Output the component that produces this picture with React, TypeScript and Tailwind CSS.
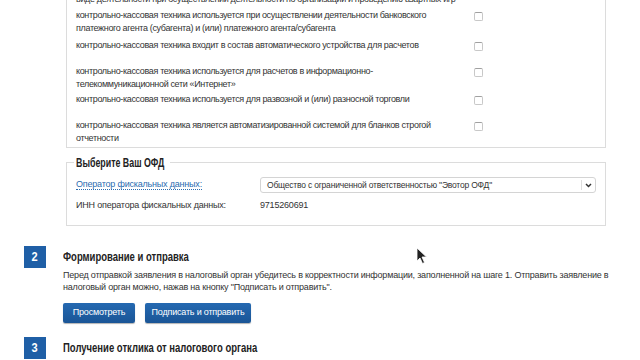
import React from "react";

const body = "font-['Liberation_Sans',Arial,sans-serif]";
const bold = "font-['Liberation_Sans',Arial,sans-serif] font-bold";

function Checkbox() {
  return (
    <div className="mt-[3px] h-[9px] w-[9px] shrink-0 rounded-[2px] border border-[#c8c8c8] border-t-[#a0a0a0] bg-white" />
  );
}

function Row({ h, lines }: { h: string; lines: string[] }) {
  return (
    <div className={`flex ${h}`}>
      <div className="w-[407px] shrink-0 pl-[9px] text-[9px] leading-[13px] tracking-[-0.35px] text-[#333] whitespace-nowrap">
        {lines.map((l, i) => (
          <div key={i}>{l}</div>
        ))}
      </div>
      <Checkbox />
    </div>
  );
}

function Badge({ n }: { n: string }) {
  return (
    <div className={`flex h-[22px] w-[22px] shrink-0 items-center justify-center bg-[#1f5fa6] text-[13px] text-white ${bold}`}>
      <span className="inline-block scale-x-[0.85]">{n}</span>
    </div>
  );
}

function Heading({ children }: { children: React.ReactNode }) {
  return (
    <div className={`whitespace-nowrap text-[13px] leading-[22px] text-[#222] ${bold}`}>
      <span className="inline-block origin-left scale-x-[0.73]">{children}</span>
    </div>
  );
}

function Cursor() {
  return (
    <svg className="absolute left-[416px] top-[247px]" width="12" height="18" viewBox="0 0 12 18">
      <path d="M1 1 L1 14 L4 11 L6.5 16.5 L8.5 15.5 L6 10 L10.5 10 Z" fill="#222" stroke="#fff" strokeWidth="0.8" />
    </svg>
  );
}

const btn =
  "h-[20px] whitespace-nowrap rounded-[2px] bg-gradient-to-b from-[#2569b1] to-[#1a5596] text-[9px] tracking-[-0.2px] text-white shadow-[0_1px_1px_rgba(0,0,0,0.3)]";

export default function App() {
  return (
    <div className={`relative h-[360px] w-[640px] overflow-hidden bg-white ${body}`}>
      <div className="pl-[63px]">
        {/* Step 1 checkbox card */}
        <div className="-mt-[23px] ml-[3px] w-[540px] border border-[#dcdcdc] pt-[2px] pb-[2px]">
          <Row h="h-[29px]" lines={["контрольно-кассовая техника используется лицами, осуществляющими деятельность", "виде деятельности при осуществлении деятельности по организации и проведению азартных игр"]} />
          <Row h="h-[30px]" lines={["контрольно-кассовая техника используется при осуществлении деятельности банковского", "платежного агента (субагента) и (или) платежного агента/субагента"]} />
          <Row h="h-[26px]" lines={["контрольно-кассовая техника входит в состав автоматического устройства для расчетов"]} />
          <Row h="h-[28px]" lines={["контрольно-кассовая техника используется для расчетов в информационно-", "телекоммуникационной сети «Интернет»"]} />
          <Row h="h-[26px]" lines={["контрольно-кассовая техника используется для развозной и (или) разносной торговли"]} />
          <Row h="h-[26px]" lines={["контрольно-кассовая техника является автоматизированной системой для бланков строгой", "отчетности"]} />
        </div>

        {/* OFD fieldset */}
        <fieldset className="mt-[8px] ml-[3px] w-[540px] border border-[#dcdcdc] pb-[13px]">
          <legend className={`ml-[7px] px-[2px] text-[13px] leading-[13px] text-[#222] ${bold}`}>
            <span className="inline-block w-[92px] origin-left scale-x-[0.68] whitespace-nowrap">Выберите Ваш ОФД</span>
          </legend>
          <div className="pl-[9px] pt-[8px] text-[9px] tracking-[-0.2px] text-[#333]">
            <div className="flex">
              <div className="w-[184px] shrink-0 pt-[1px] leading-[13px]">
                <span className="border-b border-dotted border-[#2b6cb0] text-[#2b6cb0]">Оператор фискальных данных:</span>
              </div>
              <div className="flex h-[16px] w-[336px] items-center rounded-[3px] border border-[#d4d4d4] bg-white">
                <div className="flex-1 whitespace-nowrap pl-[6px] text-[8.5px] leading-[14px] tracking-[-0.2px] text-[#333]">
                  Общество с ограниченной ответственностью "Эвотор ОФД"
                </div>
                <div className="h-[10px] w-px bg-[#ddd]" />
                <div className="flex w-[13px] items-center justify-center">
                  <svg width="7" height="5" viewBox="0 0 7 5">
                    <path d="M1 1 L3.5 3.5 L6 1" fill="none" stroke="#333" strokeWidth="1.5" />
                  </svg>
                </div>
              </div>
            </div>
            <div className="mt-[6px] flex leading-[13px]">
              <div className="w-[184px] shrink-0">ИНН оператора фискальных данных:</div>
              <div>9715260691</div>
            </div>
          </div>
        </fieldset>
      </div>

      {/* Step 2 */}
      <div className="mt-[20px] flex pl-[24px]">
        <Badge n="2" />
        <div className="ml-[17px]">
          <Heading>Формирование и отправка</Heading>
          <div className="mt-[1px] whitespace-nowrap text-[9px] leading-[12px] tracking-[-0.2px] text-[#333]">
            <div>Перед отправкой заявления в налоговый орган убедитесь в корректности информации, заполненной на шаге 1. Отправить заявление в</div>
            <div>налоговый орган можно, нажав на кнопку "Подписать и отправить".</div>
          </div>
          <div className="mt-[10px] flex gap-[10px]">
            <button className={`w-[72px] ${btn}`}>Просмотреть</button>
            <button className={`w-[106px] ${btn}`}>Подписать и отправить</button>
          </div>
        </div>
      </div>

      {/* Step 3 */}
      <div className="mt-[14px] flex pl-[24px]">
        <Badge n="3" />
        <div className="ml-[17px]">
          <Heading>Получение отклика от налогового органа</Heading>
        </div>
      </div>

      <Cursor />
    </div>
  );
}
